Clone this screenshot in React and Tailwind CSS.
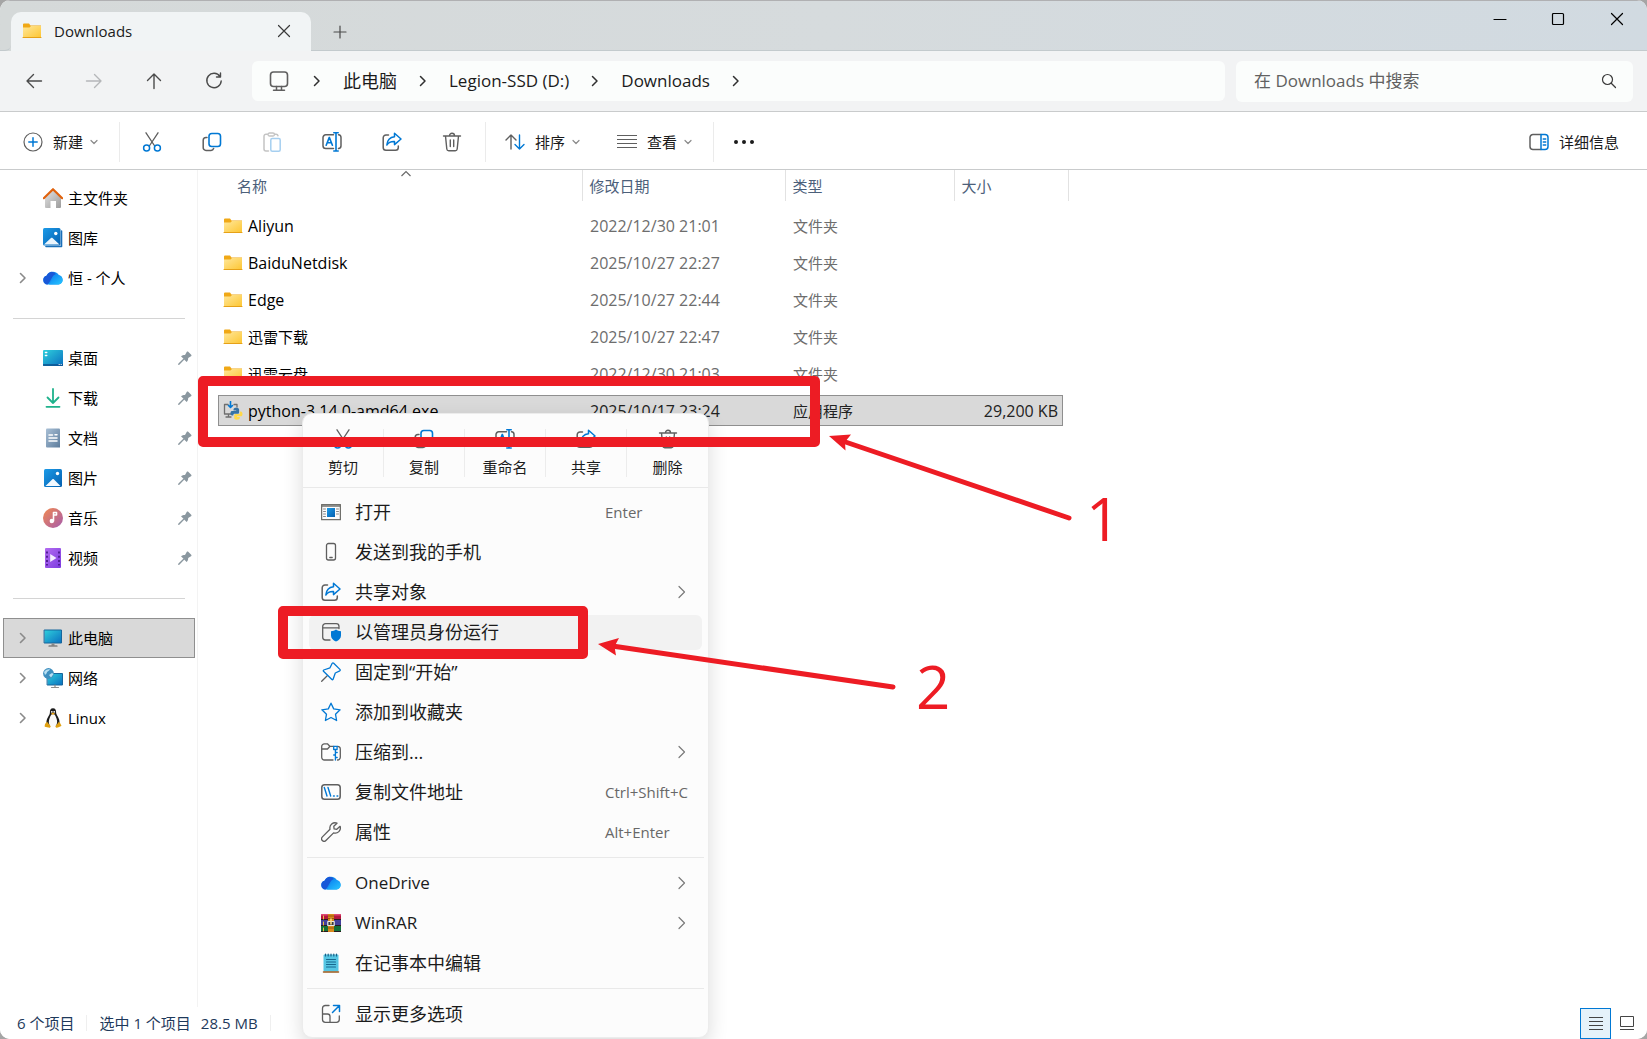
import React from "react";

const G = "#5f5f5f";
const B = "#0078d4";

function Svg({ size = 20, className = "", children, w, h }) {
  return (
    <svg
      aria-hidden="true"
      width={w || size}
      height={h || size}
      viewBox={`0 0 ${w || size} ${h || size}`}
      fill="none"
      strokeWidth="1.3"
      strokeLinecap="round"
      strokeLinejoin="round"
      className={`block shrink-0 ${className}`}
    >
      {children}
    </svg>
  );
}

/* ---------- line icons ---------- */

const Chevron = ({ color = "#303030", width = 1.5 }) => (
  <Svg w={8} h={12}>
    <path d="M1.5 1.5 6 6l-4.500 4.500" stroke={color} strokeWidth={width} />
  </Svg>
);
const ThinChevron = () => (
  <Svg w={8} h={14}>
    <path d="M1 1.500 6.500 7 1 12.500" stroke="#7a7a7a" strokeWidth="1.200" />
  </Svg>
);
const Caret = () => (
  <Svg w={8} h={6}>
    <path d="M1 1.500 4 4.500l3-3" stroke="#8a8a8a" strokeWidth="1.200" />
  </Svg>
);
const CloseX = ({ color = "#3a3a3a" }) => (
  <Svg size={14}>
    <path d="m1.500 1.500 11 11m0-11-11 11" stroke={color} strokeWidth="1.200" />
  </Svg>
);
const CutIcon = () => (
  <Svg>
    <path d="M4 .8 12.700 14M16 .8 7.300 14" stroke={G} />
    <circle cx="4.600" cy="16" r="3" stroke={B} strokeWidth="1.500" />
    <circle cx="15.400" cy="16" r="3" stroke={B} strokeWidth="1.500" />
  </Svg>
);
const CopyIcon = () => (
  <Svg>
    <path d="M5 5.500H4a2.800 2.800 0 0 0-2.800 2.800v7.200A2.800 2.800 0 0 0 4 18.500h5a2.800 2.800 0 0 0 2.600-2" stroke={G} strokeWidth="1.500" />
    <rect x="7" y="1.500" width="11.500" height="13" rx="2.800" stroke={B} strokeWidth="1.600" />
  </Svg>
);
const PasteIcon = () => (
  <Svg>
    <path d="M6.500 19H4a2 2 0 0 1-2-2V4.200A2 2 0 0 1 4 2.200h1.500M12.500 2.200H14a2 2 0 0 1 2 1.500" stroke="#c4c4c4" strokeWidth="1.500" />
    <rect x="6" y="1" width="6.500" height="3" rx="1.500" stroke="#c4c4c4" />
    <rect x="8.800" y="6.500" width="9.400" height="12.700" rx="1.500" stroke="#a6cff0" strokeWidth="1.500" />
  </Svg>
);
const RenameIcon = () => (
  <Svg>
    <path d="M11.500 2.800H3.800A2.800 2.800 0 0 0 1 5.600v8.200a2.800 2.800 0 0 0 2.800 2.800h7.700M16.500 2.800a2.800 2.800 0 0 1 2.500 2.800v8.200a2.800 2.800 0 0 1-2.500 2.800" stroke={G} strokeWidth="1.500" />
    <path d="m4.200 13.200 3.100-7.800 3.100 7.800M5.300 10.800h4M11.800.8h4.400M11.800 19h4.400M14 .8V19" stroke={B} strokeWidth="1.600" />
  </Svg>
);
const ShareIcon = () => (
  <Svg>
    <path d="M6.500 3H4a2.800 2.800 0 0 0-2.800 2.800v9.700A2.800 2.800 0 0 0 4 18.300h9.500a2.800 2.800 0 0 0 2.800-2.800V14" stroke={G} strokeWidth="1.500" />
    <path d="M12.500 1.300 19 7l-6.500 5.600V9.400c-3.600-.2-6 .9-7.700 3.600.4-4.400 3-7.800 7.700-8.300Z" stroke={B} strokeWidth="1.500" />
  </Svg>
);
const TrashIcon = () => (
  <Svg>
    <path d="M1.500 4h17M3.500 4l1.300 13a2 2 0 0 0 2 1.800h6.400a2 2 0 0 0 2-1.800l1.300-13M7.500 3.800a2.500 2.500 0 0 1 5 0M8.300 8v6.500M11.700 8v6.500" stroke={G} strokeWidth="1.400" />
  </Svg>
);
const NewIcon = () => (
  <Svg>
    <circle cx="10" cy="10" r="9" stroke={G} strokeWidth="1.200" />
    <path d="M10 5.800v8.400M5.800 10h8.400" stroke={B} strokeWidth="1.500" />
  </Svg>
);
const SortIcon = () => (
  <Svg>
    <path d="M6 17V3M1 8l5-5 5 5" stroke={G} strokeWidth="1.400" />
    <path d="M14.500 3v14M10 12.500l4.500 4.500 4.500-4.500" stroke={B} strokeWidth="1.400" />
  </Svg>
);
const ViewIcon = () => (
  <Svg>
    <path d="M.5 3.500h19M.5 7.500h19M.5 11.500h19M.5 15.500h19" stroke={G} strokeWidth="1.200" />
  </Svg>
);
const DetailsIcon = () => (
  <Svg>
    <path d="M12 2.500H4A3 3 0 0 0 1 5.500v9a3 3 0 0 0 3 3h8" stroke={G} strokeWidth="1.500" />
    <path d="M12 2.500h4a3 3 0 0 1 3 3v9a3 3 0 0 1-3 3h-4Z" stroke={B} strokeWidth="1.500" />
    <path d="M14.200 7h2.600M14.200 10h2.600M14.200 13h2.600" stroke={B} />
  </Svg>
);
const MonitorIcon = () => (
  <Svg>
    <rect x="1.500" y="1" width="17" height="14.500" rx="3" stroke={G} strokeWidth="1.600" />
    <path d="M7.500 15.500V19m5-3.500V19M4.500 19.200h11" stroke={G} strokeWidth="1.500" />
  </Svg>
);

/* ---------- coloured icons ---------- */

const Folder = () => (
  <Svg w={20} h={18}>
    <path d="M1 2.500A1 1 0 0 1 2 1.500h5l1.500 2H19v5H1Z" fill="#f0a816" />
    <path d="M1 5.500h6.500L9 4h10v11.500H1Z" fill="url(#folderFill)" />
    <path d="M1 15.500h18" stroke="#e6a117" strokeWidth="1" />
  </Svg>
);
const HomeIcon = () => (
  <Svg>
    <path d="M2 9.500 10 2l8 7.500V19a1 1 0 0 1-1 1h-4v-7H7.500v7H3a1 1 0 0 1-1-1Z" fill="url(#homeFill)" />
    <path d="m.8 10.200 9.200-9 9.200 9" stroke="#e0620d" strokeWidth="2.200" />
  </Svg>
);
const GalleryIcon = () => (
  <Svg>
    <path d="M18.500 3v15.500H3" stroke="#1a6fb8" strokeWidth="1.600" />
    <rect width="17.500" height="17.500" rx="1.500" fill="url(#blueFill)" />
    <path d="m1 16.500 7-6.500c.5-.5 1-.5 1.500 0l7 6.500Z" fill="#eaf5fd" />
    <circle cx="12.800" cy="5.500" r="1.700" fill="#fff" />
  </Svg>
);
const CloudIcon = () => (
  <Svg>
    <path d="M4.500 16.500a4.500 4.500 0 0 1-1-8.800A7 7 0 0 1 16 7.300a4.700 4.700 0 0 1-.5 9.200Z" fill="#1490f0" />
    <path d="M4.500 16.500a4.500 4.500 0 0 1-1-8.800c1-2 2.400-3.300 4.500-4 1.800 0 3.800.8 5 2.300-4.500 1.500-5 7.500-8.500 10.500Z" fill="#1858d8" />
    <path d="M6 16.500c2.500-3 3.500-7.500 7-9.300 2.200-.9 6.200.3 6.700 4.600.2 2.500-1.900 4.700-4.200 4.700Z" fill="url(#cyanFill)" />
  </Svg>
);
const DesktopIcon = () => (
  <Svg>
    <rect y="2" width="20" height="16" rx="1" fill="url(#tealFill)" />
    <path d="M2.500 4.500h1.200M2.500 7.500h1.200" stroke="#fff" strokeWidth="1.600" />
    <path d="M0 17h20" stroke="#0d4f8c" strokeWidth="1.500" />
    <path d="M16 16.500h.5m1.500 0h.5" stroke="#fff" strokeWidth=".8" />
  </Svg>
);
const DownloadIcon = () => (
  <Svg>
    <path d="M10 1v14M4.500 9.500 10 15l5.500-5.500M3.500 18.800h13" stroke="#1fb28c" strokeWidth="1.800" />
  </Svg>
);
const DocIcon = () => (
  <Svg>
    <path d="M3 1.500A1 1 0 0 1 4 .5h12a1 1 0 0 1 1 1v18H4a1 1 0 0 1-1-1Z" fill="url(#docFill)" />
    <path d="M6 7h3.500M6 10h8M6 13h8M12 6.800h2" stroke="#fff" strokeWidth="1.500" />
  </Svg>
);
const PictureIcon = () => (
  <Svg>
    <rect x="1" y="1" width="18" height="18" rx="1.500" fill="url(#blueFill)" />
    <path d="m2.500 18 6.700-6.500c.6-.6 1.200-.6 1.800 0L17.500 18Z" fill="#f2f9ff" />
    <circle cx="14.500" cy="5.500" r="1.700" fill="#fff" />
  </Svg>
);
const MusicIcon = () => (
  <Svg>
    <circle cx="10" cy="10" r="10" fill="url(#musicFill)" />
    <path d="M10.500 13V4.500h3V7h-2" stroke="#fff" strokeWidth="1.600" />
    <circle cx="8.800" cy="13" r="2.200" fill="#fff" />
  </Svg>
);
const VideoIcon = () => (
  <Svg>
    <rect x="2" width="16" height="20" rx="1" fill="url(#videoFill)" />
    <path d="M4 3.500v14M16 3.500v14" stroke="#4a1a8c" strokeWidth="1.800" strokeLinecap="butt" strokeDasharray="2 2.200" />
    <path d="m7.200 6 6.300 4-6.300 4Z" fill="#f4ecff" />
  </Svg>
);
const PcIcon = () => (
  <Svg>
    <rect x="1.500" y="2" width="17" height="13" fill="url(#tealFill)" stroke="#17669c" strokeWidth="1" />
    <path d="M8.500 15.500h3v2h-3Z" fill="#888" />
    <path d="M6 18h8" stroke="#555" strokeWidth="1.200" />
  </Svg>
);
const NetworkIcon = () => (
  <Svg>
    <rect x="4.500" y="5.500" width="15" height="11.500" fill="url(#tealFill)" stroke="#17669c" strokeWidth="1" />
    <path d="M12 17v2.500M8.500 19.500h7" stroke="#8c8c8c" strokeWidth="1.200" />
    <circle cx="5.500" cy="5.500" r="5.400" fill="#3f8fbf" />
    <path d="M1 4c2-3 5-3 6-2.500C6 3 4 3 3.500 5.500L2 7ZM6 7l3-2 1.500 1L8 9.500Z" fill="#b9e0f2" />
  </Svg>
);
const LinuxIcon = () => (
  <Svg>
    <path d="M10 .3c2.400 0 3.200 1.900 3.100 4.100 0 2.600 3.900 5.400 3.400 10.600L14 18H6l-2.500-3C3 9.800 7 7.300 6.900 4.400 6.800 2 7.600.3 10 .3Z" fill="#1c1c1c" />
    <path d="M10 6c2 0 2.400 1.800 3.200 3.800 1.200 2.700 1.500 6.200-.8 8.700H7.600c-2.300-2.500-2-6-.8-8.700C7.600 7.800 8 6 10 6Z" fill="#fafafa" />
    <circle cx="8.800" cy="3.800" r=".9" fill="#fff" />
    <circle cx="11.200" cy="3.800" r=".9" fill="#fff" />
    <path d="m8 5.500 2-1 2 1-2 1.500Z" fill="#e8a317" />
    <path d="m4 13.800 3.700 4.500c0 1.400-1.200 1.700-2.500 1.300L1.800 18.700c-.4-.8.2-1.700.2-2.700ZM16 13.800l-3.600 4.500c.1 1.400 1.200 1.700 2.500 1.300l3.400-1.600c.4-.7-.5-1.200-.8-2.300Z" fill="#e0a112" />
  </Svg>
);
const PinIcon = () => (
  <Svg w={14} h={14}>
    <path d="M8.700.9c.4-.6 1-.6 1.500-.1l3 3c.5.500.4 1.100-.2 1.500L10.200 7c-.1 1.700-.3 2.800-1.500 4L5.800 8.200 1.300 13.300.6 12.600l5.100-4.500L3 5.300c1.200-1.200 2.400-1.400 4-1.400Z" fill="#8a979f" />
    <path d="m5.500 8.500-4.700 4.700" stroke="#8a979f" strokeWidth="1.300" />
  </Svg>
);
const InstallerIcon = () => (
  <Svg>
    <path d="M5 3.500H1.500V13h8M14 6V3.500H11M3 16h5M5.500 13v3" stroke="#6e6e6e" strokeWidth="1.300" />
    <path d="M7.500.5V6M5.500 4.500l2 2 2-2" stroke={B} strokeWidth="1.600" />
    <path d="M10.500 8.500c0-1.200 1-1.700 2.700-1.700s2.900.6 2.900 1.800v2.600c0 1-.6 1.600-1.600 1.600h-2.800c-1 0-1.500.6-1.500 1.800H9c-1 0-1.500-1-1.500-2.500S8.200 10 9.500 10h3.700v-.5h-2.700Z" fill="#3673a5" />
    <path d="M17 10.500h.8c1 0 1.700 1 1.700 2.500s-.7 2.300-1.700 2.300h-3.700v.7h2.700v1c0 1.200-1.100 1.700-2.900 1.700-1.700 0-2.700-.6-2.700-1.700v-2.500c0-1 .6-1.500 1.500-1.500h2.700c1 0 1.600-.7 1.600-1.600Z" fill="#ffd94a" />
  </Svg>
);

/* ---------- context menu icons ---------- */

const OpenIcon = () => (
  <Svg>
    <rect x=".6" y="2.600" width="18.800" height="15" stroke="#70706c" />
    <path d="M1 4h18" stroke="#70706c" strokeWidth="1.500" />
    <rect x="6" y="6" width="8" height="9" fill="url(#blueFill)" />
    <path d="M2.500 7h2M2.500 9.500h2M2.500 12h2M2.500 14.500h2M15.500 7h2M15.500 9.500h2M15.500 12h2" stroke="#888" strokeWidth="1" />
  </Svg>
);
const PhoneIcon = () => (
  <Svg>
    <rect x="5.500" y="1.500" width="9" height="16.500" rx="2" stroke={G} />
    <path d="M8.800 15.500h2.400" stroke={G} />
  </Svg>
);
const AdminIcon = () => (
  <Svg>
    <path d="M9 18H4.500A2.800 2.800 0 0 1 1.700 15.200V4.500a2.800 2.800 0 0 1 2.800-2.800h10.700A2.800 2.800 0 0 1 18 4.500v2M1.700 5.800H18" stroke={G} />
    <path d="M15 7.500c1.500 1.200 3 1.600 5 1.700v4.300c0 2.800-2 4.700-5 6-3-1.300-5-3.200-5-6V9.200c2-.1 3.500-.5 5-1.700Z" fill={B} />
  </Svg>
);
const PinStartIcon = () => (
  <Svg>
    <path d="m6 14-5.300 5.300" stroke={G} />
    <path d="M11.200 1.300c.5-.6 1-.6 1.500-.1l6.200 6.200c.5.500.4 1-.1 1.400L14.300 11l-2.200 6.300c-.2.500-.8.600-1.200.2L2.500 9.200c-.4-.4-.3-1 .2-1.200L9 5.800Z" stroke={B} />
  </Svg>
);
const StarIcon = () => (
  <Svg>
    <path d="m10 1.200 2.700 5.700 6.400.9-4.600 4.400 1.100 6.300L10 15.500l-5.600 3 1.100-6.300L.9 7.800l6.400-.9Z" stroke={B} />
  </Svg>
);
const ZipIcon = () => (
  <Svg>
    <path d="M12 18H3.400A2.700 2.700 0 0 1 .7 15.300V4.500a2.700 2.700 0 0 1 2.700-2.700h3l2.400 2.500h4M16.500 4.300a2.700 2.700 0 0 1 2.800 2.700v8.300A2.700 2.700 0 0 1 16.500 18M.7 7h5.800l2.300-2.500" stroke={G} />
    <path d="M12.700 4.300h3.400v3.200h-3.400ZM14.400 8v10M14.400 10.500h1.800M12.700 13h1.700M14.400 15.500h1.800" stroke={B} />
  </Svg>
);
const PathIcon = () => (
  <Svg>
    <rect x=".8" y="2.800" width="18.400" height="14.500" rx="2.800" stroke={G} strokeWidth="1.500" />
    <path d="m3.300 5.500 2.700 8.500M7 5.500 9.700 14M12.500 14h.8M16 14h.8" stroke={B} strokeWidth="1.400" />
  </Svg>
);
const WrenchIcon = () => (
  <Svg>
    <path d="M16 1.200a5.200 5.200 0 0 0-7 6L1.400 14.900a2.400 2.400 0 0 0 3.500 3.600l7.700-7.600a5.200 5.200 0 0 0 6.500-6.600l-3.300 3-2.700-.5-.3-2.500Z" stroke={G} />
  </Svg>
);
const WinrarIcon = () => (
  <Svg>
    <path d="M0 1h20v6H0Z" fill="#b3163f" />
    <path d="M0 1h20v1.500H0Z" fill="#e04a78" />
    <path d="M0 7h20v6H0Z" fill="#43409a" />
    <path d="M0 13h20v6H0Z" fill="#13703a" />
    <path d="M0 6.500h20M0 12.500h20M0 18.500h20" stroke="#2a1a20" strokeWidth="1" />
    <path d="M2.500 3v3M2.500 9v3M2.500 15v3" stroke="#f0c040" strokeWidth="1" />
    <path d="M7 1h6v18H7Z" fill="#d98a1c" />
    <path d="M7 3h6M7 5.500h6M7 15h6" stroke="#8a4a08" strokeWidth=".8" />
    <rect x="6.800" y="8.500" width="6.400" height="4" fill="#3a3a3a" stroke="#e8e8e8" strokeWidth="1.200" />
    <path d="M10 6v5" stroke="#ffe08a" strokeWidth="1.500" />
  </Svg>
);
const NotepadIcon = () => (
  <Svg>
    <rect x="2.500" y="1.500" width="15" height="17" rx="1" fill="#55c6e3" />
    <path d="M2.500 19h15" stroke="#9c5a1c" strokeWidth="1.500" />
    <path d="M4.500 1v2M7.200 1v2M10 1v2M12.800 1v2M15.500 1v2" stroke="#1b5f86" strokeWidth="1.200" />
    <path d="M5.500 6.500h9M5.500 9h9M5.500 11.500h9M5.500 14h9" stroke="#17698f" strokeWidth="1.100" />
  </Svg>
);
const MoreIcon = () => (
  <Svg>
    <path d="M8 1.500H4.300A2.800 2.800 0 0 0 1.500 4.300v11.200a2.800 2.800 0 0 0 2.800 2.800h11.200a2.800 2.800 0 0 0 2.800-2.800V12M1.500 10h5A2.500 2.500 0 0 1 9 12.500v5.800" stroke={G} />
    <path d="M12.500 1.500h6v6M18 2l-6.500 6.500" stroke={B} strokeWidth="1.500" />
  </Svg>
);

const Gradients = () => (
  <svg width="0" height="0" aria-hidden="true" className="absolute">
    <defs>
      {[
        ["folderFill", "#ffe79a", "#fdc633"],
        ["homeFill", "#e4e4e4", "#9c9c9c"],
        ["blueFill", "#1c9be8", "#0560b0"],
        ["cyanFill", "#0a7df0", "#28c8ff"],
        ["tealFill", "#2fd0dc", "#0a6fc0"],
        ["docFill", "#a9c0d6", "#5c7c9c"],
        ["musicFill", "#f2894f", "#a65cae"],
        ["videoFill", "#b36cf0", "#7c3be0"],
      ].map(([id, a, b]) => (
        <linearGradient key={id} id={id} x1="0" y1="0" x2="1" y2="1">
          <stop stopColor={a} />
          <stop offset="1" stopColor={b} />
        </linearGradient>
      ))}
    </defs>
  </svg>
);

/* ---------- window parts ---------- */

function TitleBar() {
  return (
    <header className="flex h-[51px] items-end border-t border-[#b0b0b2] bg-linear-to-r from-[#d5d9d9] via-[#d6dbdd] to-[#d1dae1]">
      <div className="h-[38px] w-[11px] shrink-0 rounded-br-md border-b border-[#c3cacd]" />
      <div className="flex h-[39px] w-[300px] shrink-0 items-center rounded-t-[10px] bg-[#f1f4f5] pr-5 pb-0.5 pl-[11px]">
        <Folder />
        <span className="ml-3 flex-1 text-[15px] leading-5 font-medium text-[#1b1b1b]">Downloads</span>
        <button type="button" aria-label="关闭标签页">
          <CloseX />
        </button>
      </div>
      <div className="flex h-full flex-1 items-start justify-between border-b border-[#c3cacd]">
        <button type="button" aria-label="新标签页" className="mt-6 ml-[22px]">
          <Svg size={14}>
            <path d="M7 1v12M1 7h12" stroke="#4a4a4a" strokeWidth="1.200" />
          </Svg>
        </button>
        <div className="flex h-9">
          <button type="button" aria-label="最小化" className="grid w-[58px] place-items-center">
            <Svg size={14}>
              <path d="M1 7.500h12" stroke="#000" strokeWidth="1.200" />
            </Svg>
          </button>
          <button type="button" aria-label="最大化" className="grid w-[58px] place-items-center">
            <Svg size={14}>
              <rect x="1.500" y="1.500" width="11" height="11" rx="1" stroke="#000" strokeWidth="1.200" />
            </Svg>
          </button>
          <button type="button" aria-label="关闭" className="grid w-[60px] place-items-center">
            <CloseX color="#000" />
          </button>
        </div>
      </div>
    </header>
  );
}

const navIcons = [
  ["后退", "M16.500 9H2M8.500 2.500 2 9l6.500 6.500", "#4a4a4a"],
  ["前进", "M1.500 9H16M9.500 2.500 16 9l-6.500 6.500", "#b5b7b9"],
  ["向上", "M9 16.500V2M2.500 8.500 9 2l6.500 6.500", "#4a4a4a"],
  ["刷新", "M15 4.500A7.200 7.200 0 1 0 16.200 9M15.500 1v4h-4", "#4a4a4a"],
];

const crumbs = [
  ["此电脑", "text-[18px]"],
  ["Legion-SSD (D:)", "text-[17px]"],
  ["Downloads", "text-[17px]"],
];

function NavBar() {
  return (
    <nav className="flex h-[61px] items-center gap-[11px] border-b border-[#c9cbcc] bg-[#f2f3f4] pr-3.5 pl-1">
      <div className="-mr-[3px] flex w-60 shrink-0">
        {navIcons.map(([label, d, color]) => (
          <button key={label} type="button" aria-label={label} className="grid h-9 w-[60px] place-items-center">
            <Svg size={18}>
              <path d={d} stroke={color} strokeWidth="1.400" />
            </Svg>
          </button>
        ))}
      </div>
      <ol className="flex h-10 min-w-0 flex-1 items-center rounded-md bg-[#fbfdfc] pl-[17px] leading-6 text-[#1b1b1b]">
        <li className="mr-6">
          <MonitorIcon />
        </li>
        {crumbs.map(([t, size]) => (
          <li key={t} className="flex items-center">
            <Chevron />
            <button type="button" className={`mx-[22px] whitespace-nowrap ${size}`}>
              {t}
            </button>
          </li>
        ))}
        <li>
          <Chevron />
        </li>
      </ol>
      <label className="flex h-[41px] w-[397px] shrink-0 items-center rounded-md bg-[#fbfdfc] pr-4 pl-[18px]">
        <input
          type="search"
          aria-label="搜索"
          placeholder="在 Downloads 中搜索"
          className="min-w-0 flex-1 bg-transparent text-[17px] leading-6 outline-none placeholder:text-[#616161]"
        />
        <Svg size={16}>
          <circle cx="6.500" cy="6.500" r="5" stroke="#3a3a3a" strokeWidth="1.200" />
          <path d="m10.500 10.500 4 4" stroke="#3a3a3a" strokeWidth="1.200" />
        </Svg>
      </label>
    </nav>
  );
}

const Separator = () => <span className="h-10 w-px shrink-0 bg-[#ebebeb]" />;

function ToolBar() {
  const actions = [
    ["剪切", CutIcon],
    ["复制", CopyIcon],
    ["粘贴", PasteIcon],
    ["重命名", RenameIcon],
    ["共享", ShareIcon],
    ["删除", TrashIcon],
  ];
  return (
    <div role="toolbar" className="flex h-[58px] items-center border-b border-[#c9cbcc] bg-white pt-0.5 pr-7 pl-[23px] text-[15px] leading-5 text-[#1b1b1b]">
      <button type="button" className="flex w-24 shrink-0 items-center">
        <NewIcon />
        <span className="ml-2.5">新建</span>
        <span className="ml-[7px]">
          <Caret />
        </span>
      </button>
      <Separator />
      <div className="flex pr-[3px] pl-[2px]">
        {actions.map(([label, Icon]) => (
          <button key={label} type="button" aria-label={label} className="grid h-10 w-[60px] place-items-center">
            <Icon />
          </button>
        ))}
      </div>
      <Separator />
      <button type="button" className="ml-[19px] flex items-center">
        <SortIcon />
        <span className="ml-2.5">排序</span>
        <span className="ml-[7px]">
          <Caret />
        </span>
      </button>
      <button type="button" className="mr-[21px] ml-[37px] flex items-center">
        <ViewIcon />
        <span className="ml-2.5">查看</span>
        <span className="ml-[7px]">
          <Caret />
        </span>
      </button>
      <Separator />
      <button type="button" aria-label="更多" className="ml-5">
        <Svg>
          <path d="M2 10h.01M10 10h.01M18 10h.01" stroke="#1b1b1b" strokeWidth="4" />
        </Svg>
      </button>
      <button type="button" className="ml-auto flex items-center gap-2.5">
        <DetailsIcon />
        详细信息
      </button>
    </div>
  );
}

function SideItem({ icon: Icon, label, expandable, pinned, selected }) {
  return (
    <a
      href="#"
      className={`mr-px ml-[3px] flex h-10 items-center border pr-0.5 ${selected ? "border-[#8f8f8f] bg-[#d9d9d9]" : "border-transparent"}`}
    >
      <span className="flex w-[39px] shrink-0 pl-[15px]">{expandable && <Chevron color="#8a8a8a" width={1.6} />}</span>
      <Icon />
      <span className="ml-[5px] flex-1 whitespace-nowrap">{label}</span>
      {pinned && <PinIcon />}
    </a>
  );
}

function Sidebar() {
  return (
    <aside className="flex w-[198px] shrink-0 flex-col border-r border-[#f3f3f3] pt-2 pr-px text-[15px] leading-5 text-black">
      <SideItem icon={HomeIcon} label="主文件夹" />
      <SideItem icon={GalleryIcon} label="图库" />
      <SideItem icon={CloudIcon} label="恒 - 个人" expandable />
      <hr className="mt-5 mr-[11px] mb-[19px] ml-[13px] border-[#d4d4d4]" />
      <SideItem icon={DesktopIcon} label="桌面" pinned />
      <SideItem icon={DownloadIcon} label="下载" pinned />
      <SideItem icon={DocIcon} label="文档" pinned />
      <SideItem icon={PictureIcon} label="图片" pinned />
      <SideItem icon={MusicIcon} label="音乐" pinned />
      <SideItem icon={VideoIcon} label="视频" pinned />
      <hr className="mt-5 mr-[11px] mb-[19px] ml-[13px] border-[#d4d4d4]" />
      <SideItem icon={PcIcon} label="此电脑" expandable selected />
      <SideItem icon={NetworkIcon} label="网络" expandable />
      <SideItem icon={LinuxIcon} label="Linux" expandable />
    </aside>
  );
}

const files = [
  { name: "Aliyun", latin: true, date: "2022/12/30 21:01", type: "文件夹", size: "" },
  { name: "BaiduNetdisk", latin: true, date: "2025/10/27 22:27", type: "文件夹", size: "" },
  { name: "Edge", latin: true, date: "2025/10/27 22:44", type: "文件夹", size: "" },
  { name: "迅雷下载", date: "2025/10/27 22:47", type: "文件夹", size: "" },
  { name: "迅雷云盘", date: "2022/12/30 21:03", type: "文件夹", size: "" },
  { name: "python-3.14.0-amd64.exe", latin: true, date: "2025/10/17 23:24", type: "应用程序", size: "29,200 KB", selected: true },
];

function FileTable() {
  const th = "h-[31px] border-r border-[#e2e2e2] p-0 text-left font-normal";
  const cell = "mb-1.5 flex h-[31px] items-center whitespace-nowrap";
  const on = "border-y border-[#8f8f8f] bg-[#d9d9d9]";
  return (
    <table className="ml-5 table-fixed self-start text-[15px] leading-5">
      <colgroup>
        <col className="w-[364px]" />
        <col className="w-[203px]" />
        <col className="w-[169px]" />
        <col className="w-[109px]" />
        <col className="w-[5px]" />
      </colgroup>
      <thead className="text-[#4c607a]">
        <tr>
          <th className={`relative ${th}`}>
            <span className="pl-[19px]">名称</span>
            <svg width="12" height="7" viewBox="0 0 12 7" fill="none" className="absolute top-0 left-[182px]" aria-hidden="true">
              <path d="m1.500 6 4.500-4.500L10.500 6" stroke="#6a6a6a" strokeWidth="1.200" />
            </svg>
          </th>
          <th className={th}>
            <span className="pl-[7px]">修改日期</span>
          </th>
          <th className={th}>
            <span className="pl-[7px]">类型</span>
          </th>
          <th className="h-[31px] p-0 text-left font-normal">
            <span className="pl-[7px]">大小</span>
          </th>
          <th className={th} />
        </tr>
      </thead>
      <tbody className="text-[#6d6d6d] before:block before:h-[9px]">
        {files.map((f) => {
          const s = f.selected;
          const c = `${cell} ${s ? `${on} text-[#222]` : ""}`;
          return (
            <tr key={f.name}>
              <td className="p-0">
                <div className={`${c} gap-[5px] text-black ${s ? "border-l pl-1" : "pl-[5px]"}`}>
                  {s ? <InstallerIcon /> : <Folder />}
                  <span className={f.latin ? "text-[16px]" : "text-[15px]"}>{f.name}</span>
                </div>
              </td>
              <td className="p-0">
                <div className={`${c} pl-2 text-[16px]`}>{f.date}</div>
              </td>
              <td className="p-0">
                <div className={`${c} pl-2`}>{f.type}</div>
              </td>
              <td className="p-0">
                <div className={`${c} justify-end pr-1 text-[16px] ${s ? "border-r" : ""}`}>{f.size}</div>
              </td>
              <td className="p-0" />
            </tr>
          );
        })}
      </tbody>
    </table>
  );
}

function MenuItem({ icon: Icon, label, hint, sub, active }) {
  return (
    <li className="flex h-10 items-center px-1.5">
      <button
        type="button"
        role="menuitem"
        className={`flex h-[35px] w-full items-center rounded-md pr-4 pl-3 text-left ${active ? "bg-[#f2f2f2]" : ""}`}
      >
        <Icon />
        <span className="ml-3.5 flex-1 whitespace-nowrap">{label}</span>
        {hint && <span className="w-[81px] text-[15px] whitespace-nowrap text-[#686868]">{hint}</span>}
        {sub && <ThinChevron />}
      </button>
    </li>
  );
}

const MenuRule = () => <hr className="mx-1 my-[5px] border-[#e9e9e9]" />;

function ContextMenu() {
  const top = [
    ["剪切", CutIcon],
    ["复制", CopyIcon],
    ["重命名", RenameIcon],
    ["共享", ShareIcon],
    ["删除", TrashIcon],
  ];
  return (
    <div
      role="menu"
      className="absolute top-[413px] left-[302px] w-[407px] rounded-[10px] border border-[#ececec] bg-[#fcfcfc] pb-[3px] text-[18px] leading-6 text-[#1b1b1b] shadow-[0_8px_20px_rgba(0,0,0,0.14)]"
    >
      <div className="flex h-[74px] items-start border-b border-[#e9e9e9] pt-[15px] text-[15px] leading-5">
        {top.map(([label, Icon], i) => (
          <button
            key={label}
            type="button"
            role="menuitem"
            className={`flex h-12 w-[81px] flex-col items-center justify-between ${i < 4 ? "border-r border-[#ececec]" : ""}`}
          >
            <Icon />
            <span className="whitespace-nowrap">{label}</span>
          </button>
        ))}
      </div>
      <ul className="pt-1">
        <MenuItem icon={OpenIcon} label="打开" hint="Enter" />
        <MenuItem icon={PhoneIcon} label="发送到我的手机" />
        <MenuItem icon={ShareIcon} label="共享对象" sub />
        <MenuItem icon={AdminIcon} label="以管理员身份运行" active />
        <MenuItem icon={PinStartIcon} label="固定到“开始”" />
        <MenuItem icon={StarIcon} label="添加到收藏夹" />
        <MenuItem icon={ZipIcon} label="压缩到..." sub />
        <MenuItem icon={PathIcon} label="复制文件地址" hint="Ctrl+Shift+C" />
        <MenuItem icon={WrenchIcon} label="属性" hint="Alt+Enter" />
      </ul>
      <MenuRule />
      <ul className="[&_button]:text-[17px]">
        <MenuItem icon={CloudIcon} label="OneDrive" sub />
        <MenuItem icon={WinrarIcon} label="WinRAR" sub />
      </ul>
      <ul>
        <MenuItem icon={NotepadIcon} label="在记事本中编辑" />
      </ul>
      <MenuRule />
      <ul>
        <MenuItem icon={MoreIcon} label="显示更多选项" />
      </ul>
    </div>
  );
}

function StatusBar() {
  return (
    <footer className="flex h-8 items-center bg-white pl-[17px] text-[15px] leading-5 text-[#1e395b]">
      <span>6 个项目</span>
      <span className="mx-3 h-4 w-px bg-[#efefef]" />
      <span>选中 1 个项目</span>
      <span className="ml-2.5">28.5 MB</span>
      <span className="ml-3 h-4 w-px bg-[#efefef]" />
      <div className="ml-auto flex pr-[5px]">
        <button type="button" aria-label="详细列表" className="grid h-[31px] w-[31px] place-items-center border border-[#0078d4] bg-[#e5f2fa]">
          <Svg size={16}>
            <path d="M1 2.500h14M1 6.500h14M1 10.500h14M1 14.500h14" stroke="#444" strokeWidth="1" strokeLinecap="butt" />
          </Svg>
        </button>
        <button type="button" aria-label="大缩略图" className="grid w-[31px] place-items-center">
          <Svg size={16}>
            <path d="M1.500 1.500h13v10h-13ZM1 14.500h14" stroke="#444" strokeWidth="1" strokeLinecap="butt" />
          </Svg>
        </button>
      </div>
    </footer>
  );
}

function Annotations() {
  const red = "#ed1c24";
  return (
    <div className="pointer-events-none absolute inset-0 text-[60px] leading-none font-medium text-[#ed1c24]">
      <div className="absolute top-[376px] left-[198px] h-[71px] w-[622px] rounded-[5px] border-[10px] border-[#ed1c24]" />
      <div className="absolute top-[606px] left-[278px] h-[53px] w-[310px] rounded-[5px] border-[10px] border-[#ed1c24]" />
      <svg width="300" height="270" viewBox="820 430 300 270" className="absolute top-[430px] left-[820px]" fill={red} aria-hidden="true">
        <path d="M844 441.500 1069 518" stroke={red} strokeWidth="5" strokeLinecap="round" />
        <path d="m829 436 22-1.500-6 7.500.5 8.500Z" />
      </svg>
      <svg width="310" height="60" viewBox="590 635 310 60" className="absolute top-[635px] left-[590px]" fill={red} aria-hidden="true">
        <path d="M614 646.300 893 687" stroke={red} strokeWidth="5" strokeLinecap="round" />
        <path d="m598 644 21-6-4.500 8.500 1.500 9Z" />
      </svg>
      <span className="absolute top-[488px] left-[1086px]">1</span>
      <span className="absolute top-[656px] left-[916px]">2</span>
    </div>
  );
}

export default function App() {
  return (
    <div className="relative flex min-h-screen flex-col overflow-hidden bg-[#a5a5a5] [font-family:'Open_Sans','Noto_Sans_CJK_SC',sans-serif]">
      <Gradients />
      <div className="flex flex-1 flex-col overflow-hidden rounded-[10px] bg-white">
        <TitleBar />
        <NavBar />
        <ToolBar />
        <main className="flex flex-1 bg-white">
          <Sidebar />
          <FileTable />
        </main>
        <StatusBar />
      </div>
      <ContextMenu />
      <Annotations />
    </div>
  );
}
